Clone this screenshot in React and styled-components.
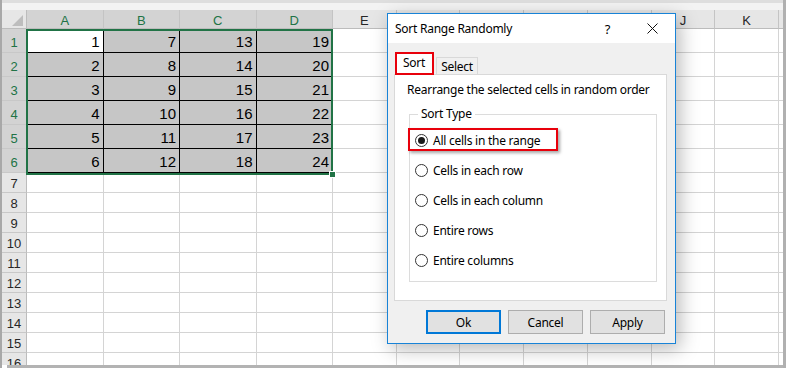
import React from "react";
import styled, { createGlobalStyle } from "styled-components";

const GlobalStyle = createGlobalStyle`
  html, body { margin: 0; padding: 0; background: #fff; overflow: hidden; }
  * { box-sizing: border-box; }
`;

const Frame = styled.div`
  position: relative;
  width: 786px;
  height: 368px;
  display: flex;
  flex-direction: column;
  background: #fff;
  border-left: 2px solid #a8a8a8;
  border-right: 3px solid #b0b0b0;
  overflow: hidden;
`;

const TopStrip = styled.div`
  height: 10px;
  flex: none;
  background: #f3f3f3;
  border-top: 3px solid #dedede;
`;

const Sheet = styled.div`
  position: relative;
  flex: 1;
  display: grid;
  grid-template-columns: 25px repeat(4, 76.5px) repeat(7, 63.72px) 20px;
  grid-template-rows: 19px repeat(6, 24px) repeat(10, 20px);
  align-content: start;
  overflow: hidden;
`;

const BottomBar = styled.div`
  height: 3px;
  flex: none;
  background: #b3b3b3;
  margin-left: 5px;
`;

const Corner = styled.div`
  background: #e6e6e6;
  border-right: 1px solid #bcbcbc;
  border-bottom: 1px solid #bcbcbc;
  display: flex;
  align-items: flex-end;
  justify-content: flex-end;
  padding: 0 3px 2px 0;
`;

const ColHead = styled.div`
  background: ${(p) => (p.$sel ? "#d3d3d3" : "#e6e6e6")};
  color: ${(p) => (p.$sel ? "#217346" : "#262626")};
  border-right: 1px solid #c4c4c4;
  border-bottom: 1px solid #bcbcbc;
  font-family: "Liberation Sans", Arial, sans-serif;
  font-size: 13px;
  display: flex;
  align-items: center;
  justify-content: center;
  padding-top: 2px;
`;

const RowHead = styled.div`
  background: ${(p) => (p.$sel ? "#d3d3d3" : "#e6e6e6")};
  color: ${(p) => (p.$sel ? "#217346" : "#262626")};
  border-right: 1px solid #bcbcbc;
  border-bottom: 1px solid #c8c8c8;
  font-family: "Liberation Sans", Arial, sans-serif;
  font-size: 13px;
  display: flex;
  align-items: center;
  justify-content: center;
  padding-top: ${(p) => (p.$tall ? "3px" : "1px")};
`;

const Cell = styled.div`
  background: ${(p) => (p.$fill ? "#c6c6c6" : "#fff")};
  border-right: 1px solid ${(p) => (p.$ranged ? "#000" : "#d4d4d4")};
  border-bottom: 1px solid ${(p) => (p.$ranged ? "#000" : "#d4d4d4")};
  font-family: "Liberation Sans", Arial, sans-serif;
  font-size: 15px;
  color: #000;
  display: flex;
  align-items: flex-end;
  justify-content: flex-end;
  padding: 0 3px 1px 0;
  line-height: 18px;
`;

const Selection = styled.div`
  position: absolute;
  left: 24px;
  top: 19px;
  width: 307px;
  height: 146px;
  border: 2px solid #217346;
  pointer-events: none;
`;

const FillHandle = styled.div`
  position: absolute;
  right: -5px;
  bottom: -5px;
  width: 7px;
  height: 7px;
  background: #217346;
  border: 1px solid #fff;
`;

/* ---------- Dialog ---------- */

const Dialog = styled.div`
  position: absolute;
  left: 385px;
  top: 13px;
  width: 289px;
  height: 331px;
  background: #f0f0f0;
  border: 1px solid #1883d7;
  box-shadow: 4px 5px 18px rgba(0, 0, 0, 0.28);
  display: flex;
  flex-direction: column;
  font-family: "Noto Sans", "Open Sans", sans-serif;
  font-size: 12px;
  letter-spacing: -0.25px;
  color: #000;
`;

const TitleBar = styled.div`
  height: 29px;
  background: #fff;
  display: flex;
  align-items: center;
  padding-left: 7px;
`;

const Title = styled.div`
  flex: 1;
`;

const TitleButton = styled.div`
  width: 45px;
  height: 29px;
  display: flex;
  align-items: center;
  justify-content: center;
  font-size: 13px;
`;

const Body = styled.div`
  flex: 1;
  display: flex;
  flex-direction: column;
  padding: 9px 8px 0 6px;
`;

const Tabs = styled.div`
  display: flex;
  align-items: flex-end;
  height: 22px;
  gap: 2px;
  padding-left: 1px;
`;

const Tab = styled.div`
  height: ${(p) => (p.$active ? "23px" : "17px")};
  padding: ${(p) => (p.$active ? "0 7px 2px 6px" : "0 4px 0 4px")};
  background: ${(p) => (p.$active ? "#fff" : "#f0f0f0")};
  border: ${(p) => (p.$active ? "2px solid #e8000b" : "1px solid #d9d9d9")};
  border-bottom: ${(p) => (p.$active ? "2px solid #e8000b" : "none")};
  display: flex;
  align-items: center;
  position: relative;
  z-index: ${(p) => (p.$active ? 2 : 1)};
  margin-bottom: ${(p) => (p.$active ? "-1px" : "0")};
`;

const Panel = styled.div`
  height: 227px;
  background: #fff;
  border: 1px solid #d9d9d9;
  display: flex;
  flex-direction: column;
  padding: 6px 9px 0 12px;
`;

const Description = styled.div`
  line-height: 17px;
  white-space: nowrap;
`;

const GroupBox = styled.fieldset`
  margin: 9px 0 0 2px;
  height: 175px;
  border: 1px solid #dcdcdc;
  padding: 4px 0 0 5px;
  display: flex;
  flex-direction: column;
`;

const Legend = styled.legend`
  padding: 0 3px;
  margin-left: 3px;
  line-height: 14px;
`;

const Options = styled.div`
  display: flex;
  flex-direction: column;
`;

const OptionRow = styled.label`
  display: flex;
  align-items: center;
  height: 30px;
  gap: 5px;
  position: relative;
`;

const Highlight = styled.div`
  position: absolute;
  left: -7px;
  top: 3px;
  width: 150px;
  height: 23px;
  border: 2px solid #e8000b;
  box-shadow: 2px 2px 3px rgba(0, 0, 0, 0.35);
  pointer-events: none;
`;

const Radio = styled.span`
  width: 13px;
  height: 13px;
  border-radius: 50%;
  border: 1px solid #333;
  background: #fff;
  display: flex;
  align-items: center;
  justify-content: center;
  flex: none;
  &::after {
    content: "";
    width: 7px;
    height: 7px;
    border-radius: 50%;
    background: ${(p) => (p.$checked ? "#1a1a1a" : "transparent")};
  }
`;

const Buttons = styled.div`
  display: flex;
  justify-content: flex-end;
  gap: 7px;
  padding-top: 9px;
  padding-right: 2px;
`;

const Button = styled.button`
  width: 75px;
  height: 24px;
  background: #e1e1e1;
  border: ${(p) => (p.$primary ? "2px solid #0078d7" : "1px solid #adadad")};
  font-family: "Noto Sans", "Open Sans", sans-serif;
  font-size: 12px;
  letter-spacing: -0.25px;
  color: #000;
  padding: 0;
  display: flex;
  align-items: center;
  justify-content: center;
`;

const columns = ["A", "B", "C", "D", "E", "F", "G", "H", "I", "J", "K", ""];

export default function App() {
  const rows = [];
  for (let r = 1; r <= 16; r++) {
    const inRange = r <= 6;
    rows.push(
      <RowHead key={`rh${r}`} $sel={inRange} $tall={inRange}>
        {r}
      </RowHead>
    );
    columns.forEach((c, ci) => {
      const ranged = inRange && ci < 4;
      const value = ranged ? r + ci * 6 : "";
      rows.push(
        <Cell
          key={`c${ci}-${r}`}
          $ranged={ranged}
          $fill={ranged && !(r === 1 && ci === 0)}
        >
          {value}
        </Cell>
      );
    });
  }

  const options = [
    "All cells in the range",
    "Cells in each row",
    "Cells in each column",
    "Entire rows",
    "Entire columns",
  ];

  return (
    <>
      <GlobalStyle />
      <Frame>
        <TopStrip />
        <Sheet>
          <Corner>
            <svg width="11" height="11" viewBox="0 0 11 11">
              <polygon points="11,0 11,11 0,11" fill="#bdbdbd" />
            </svg>
          </Corner>
          {columns.map((c, i) => (
            <ColHead key={`h${i}`} $sel={i < 4}>
              {c}
            </ColHead>
          ))}
          {rows}
          <Selection>
            <FillHandle />
          </Selection>
        </Sheet>
        <BottomBar />

        <Dialog>
          <TitleBar>
            <Title>Sort Range Randomly</Title>
            <TitleButton>?</TitleButton>
            <TitleButton>
              <svg width="11" height="11" viewBox="0 0 11 11">
                <path d="M0.5 0.5 L10.5 10.5 M10.5 0.5 L0.5 10.5" stroke="#111" strokeWidth="1" />
              </svg>
            </TitleButton>
          </TitleBar>
          <Body>
            <Tabs>
              <Tab $active>Sort</Tab>
              <Tab>Select</Tab>
            </Tabs>
            <Panel>
              <Description>Rearrange the selected cells in random order</Description>
              <GroupBox>
                <Legend>Sort Type</Legend>
                <Options>
                  {options.map((o, i) => (
                    <OptionRow key={o}>
                      {i === 0 && <Highlight />}
                      <Radio $checked={i === 0} />
                      {o}
                    </OptionRow>
                  ))}
                </Options>
              </GroupBox>
            </Panel>
            <Buttons>
              <Button $primary>Ok</Button>
              <Button>Cancel</Button>
              <Button>Apply</Button>
            </Buttons>
          </Body>
        </Dialog>
      </Frame>
    </>
  );
}
